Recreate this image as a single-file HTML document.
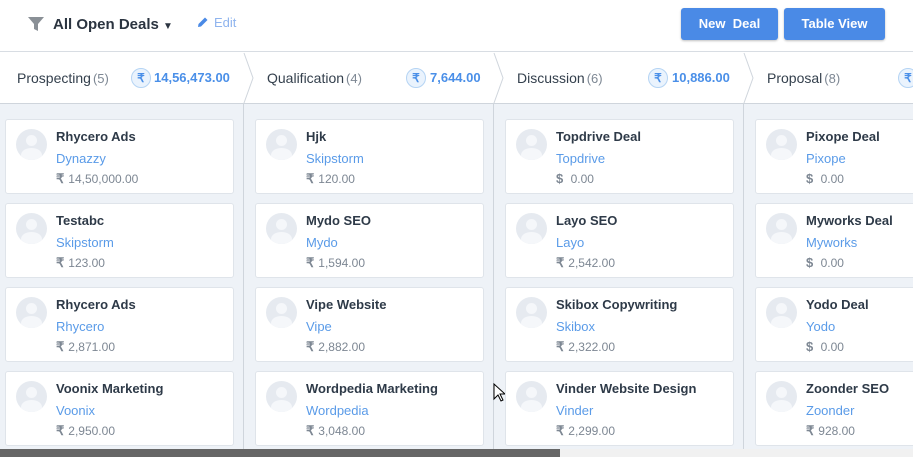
<!DOCTYPE html>
<html><head><meta charset="utf-8"><style>
*{margin:0;padding:0;box-sizing:border-box}
body{width:913px;height:457px;overflow:hidden;background:#fff;font-family:"Liberation Sans",sans-serif;position:relative}
.abs{position:absolute}
.hdr{left:0;top:0;width:913px;height:52px;background:#fff;border-bottom:1px solid #d8dde3}
.title{left:53px;top:16px;font-size:15px;font-weight:bold;color:#2b3440}
.edit{left:214px;top:15px;font-size:13px;color:#8fb4ee}
.btn{top:8px;height:32px;background:#4a8ae6;color:#fff;font-weight:bold;font-size:13px;border-radius:3px;text-align:center;line-height:31px;box-shadow:0 1px 2px rgba(0,0,0,.25)}
.stages{left:0;top:52px;width:913px;height:52px;background:#fff;border-bottom:1px solid #cfd5dc}
.board{left:0;top:104px;width:913px;height:345px;background:#eef2f7}
.sep{top:104px;width:1px;height:345px;background:#cfd5dc}
.sname{top:70px;font-size:14px;color:#34404d}
.sname span{color:#7d8793;font-size:13px;margin-left:2px}
.coin{top:68px;width:20px;height:20px;border-radius:50%;background:#eaf3fd;border:1px solid #b5d4f4;color:#4a8fe8;font-size:12px;text-align:center;line-height:18px;font-weight:bold}
.amt{top:70px;font-size:13px;font-weight:bold;color:#4a8fe8}
.card{width:229px;height:75px;background:#fff;border:1px solid #dfe4ea;border-radius:3px}
.av{left:10px;top:9px;width:31px;height:31px;border-radius:50%;background:#e6eaf0;overflow:hidden}
.av:before{content:"";position:absolute;left:10px;top:6px;width:11px;height:11px;border-radius:50%;background:#f5f7fa}
.av:after{content:"";position:absolute;left:5px;top:19px;width:21px;height:14px;border-radius:50%;background:#f5f7fa}
.ct{left:50px;top:9px;font-size:13px;font-weight:bold;color:#2e3a48;white-space:nowrap}
.cc{left:50px;top:31px;font-size:13px;color:#5a9be8}
.ca{left:50px;top:51px;font-size:12px;color:#7d8793}
.ca b{font-size:13px;margin-right:4px}
</style></head><body>
<div class="abs hdr"></div>
<svg class="abs" style="left:27px;top:14px" width="20" height="20" viewBox="0 0 20 20"><path d="M1 3h16l-6 7v7l-4-2v-5z" fill="#8a9096"/></svg>
<div class="abs title">All Open Deals <span style="font-size:10px">▼</span></div>
<svg class="abs" style="left:197px;top:16px" width="12" height="12" viewBox="0 0 12 12"><path d="M1 11l0.5-3 6.5-6.5 2.5 2.5-6.5 6.5z" fill="#4a8ae6"/></svg>
<div class="abs edit">Edit</div>
<div class="abs btn" style="left:681px;width:97px">New&nbsp; Deal</div>
<div class="abs btn" style="left:784px;width:101px">Table View</div>

<div class="abs stages"></div>
<svg class="abs" style="left:0;top:52px" width="913" height="52"><g fill="none" stroke="#cfd5dc"><path d="M244 1l9 25-9 25"/><path d="M494 1l9 25-9 25"/><path d="M744 1l9 25-9 25"/></g></svg>
<div class="abs sname" style="left:17px">Prospecting<span>(5)</span></div>
<div class="abs coin" style="left:131px">₹</div><div class="abs amt" style="left:154px">14,56,473.00</div>
<div class="abs sname" style="left:267px">Qualification<span>(4)</span></div>
<div class="abs coin" style="left:406px">₹</div><div class="abs amt" style="left:430px">7,644.00</div>
<div class="abs sname" style="left:517px">Discussion<span>(6)</span></div>
<div class="abs coin" style="left:648px">₹</div><div class="abs amt" style="left:672px">10,886.00</div>
<div class="abs sname" style="left:767px">Proposal<span>(8)</span></div>
<div class="abs coin" style="left:898px">₹</div>

<div class="abs board"></div>
<div class="abs sep" style="left:243px"></div>
<div class="abs sep" style="left:493px"></div>
<div class="abs sep" style="left:743px"></div>

<div class="abs card" style="left:5px;top:119px"><div class="abs av"></div><div class="abs ct">Rhycero Ads</div><div class="abs cc">Dynazzy</div><div class="abs ca"><b>₹</b>14,50,000.00</div></div>
<div class="abs card" style="left:5px;top:203px"><div class="abs av"></div><div class="abs ct">Testabc</div><div class="abs cc">Skipstorm</div><div class="abs ca"><b>₹</b>123.00</div></div>
<div class="abs card" style="left:5px;top:287px"><div class="abs av"></div><div class="abs ct">Rhycero Ads</div><div class="abs cc">Rhycero</div><div class="abs ca"><b>₹</b>2,871.00</div></div>
<div class="abs card" style="left:5px;top:371px"><div class="abs av"></div><div class="abs ct">Voonix Marketing</div><div class="abs cc">Voonix</div><div class="abs ca"><b>₹</b>2,950.00</div></div>

<div class="abs card" style="left:255px;top:119px"><div class="abs av"></div><div class="abs ct">Hjk</div><div class="abs cc">Skipstorm</div><div class="abs ca"><b>₹</b>120.00</div></div>
<div class="abs card" style="left:255px;top:203px"><div class="abs av"></div><div class="abs ct">Mydo SEO</div><div class="abs cc">Mydo</div><div class="abs ca"><b>₹</b>1,594.00</div></div>
<div class="abs card" style="left:255px;top:287px"><div class="abs av"></div><div class="abs ct">Vipe Website</div><div class="abs cc">Vipe</div><div class="abs ca"><b>₹</b>2,882.00</div></div>
<div class="abs card" style="left:255px;top:371px"><div class="abs av"></div><div class="abs ct">Wordpedia Marketing</div><div class="abs cc">Wordpedia</div><div class="abs ca"><b>₹</b>3,048.00</div></div>

<div class="abs card" style="left:505px;top:119px"><div class="abs av"></div><div class="abs ct">Topdrive Deal</div><div class="abs cc">Topdrive</div><div class="abs ca"><b>$</b> 0.00</div></div>
<div class="abs card" style="left:505px;top:203px"><div class="abs av"></div><div class="abs ct">Layo SEO</div><div class="abs cc">Layo</div><div class="abs ca"><b>₹</b>2,542.00</div></div>
<div class="abs card" style="left:505px;top:287px"><div class="abs av"></div><div class="abs ct">Skibox Copywriting</div><div class="abs cc">Skibox</div><div class="abs ca"><b>₹</b>2,322.00</div></div>
<div class="abs card" style="left:505px;top:371px"><div class="abs av"></div><div class="abs ct">Vinder Website Design</div><div class="abs cc">Vinder</div><div class="abs ca"><b>₹</b>2,299.00</div></div>

<div class="abs card" style="left:755px;top:119px"><div class="abs av"></div><div class="abs ct">Pixope Deal</div><div class="abs cc">Pixope</div><div class="abs ca"><b>$</b> 0.00</div></div>
<div class="abs card" style="left:755px;top:203px"><div class="abs av"></div><div class="abs ct">Myworks Deal</div><div class="abs cc">Myworks</div><div class="abs ca"><b>$</b> 0.00</div></div>
<div class="abs card" style="left:755px;top:287px"><div class="abs av"></div><div class="abs ct">Yodo Deal</div><div class="abs cc">Yodo</div><div class="abs ca"><b>$</b> 0.00</div></div>
<div class="abs card" style="left:755px;top:371px"><div class="abs av"></div><div class="abs ct">Zoonder SEO</div><div class="abs cc">Zoonder</div><div class="abs ca"><b>₹</b>928.00</div></div>

<svg class="abs" style="left:493px;top:383px" width="12" height="20" viewBox="0 0 12 20"><path d="M1 1v15l4-4 3 6 2-1-3-6h5z" fill="#fff" stroke="#000"/></svg>
<div class="abs" style="left:0;top:449px;width:913px;height:8px;background:#f1f1f1"></div>
<div class="abs" style="left:0;top:449px;width:560px;height:8px;background:#666"></div>
</body></html>
